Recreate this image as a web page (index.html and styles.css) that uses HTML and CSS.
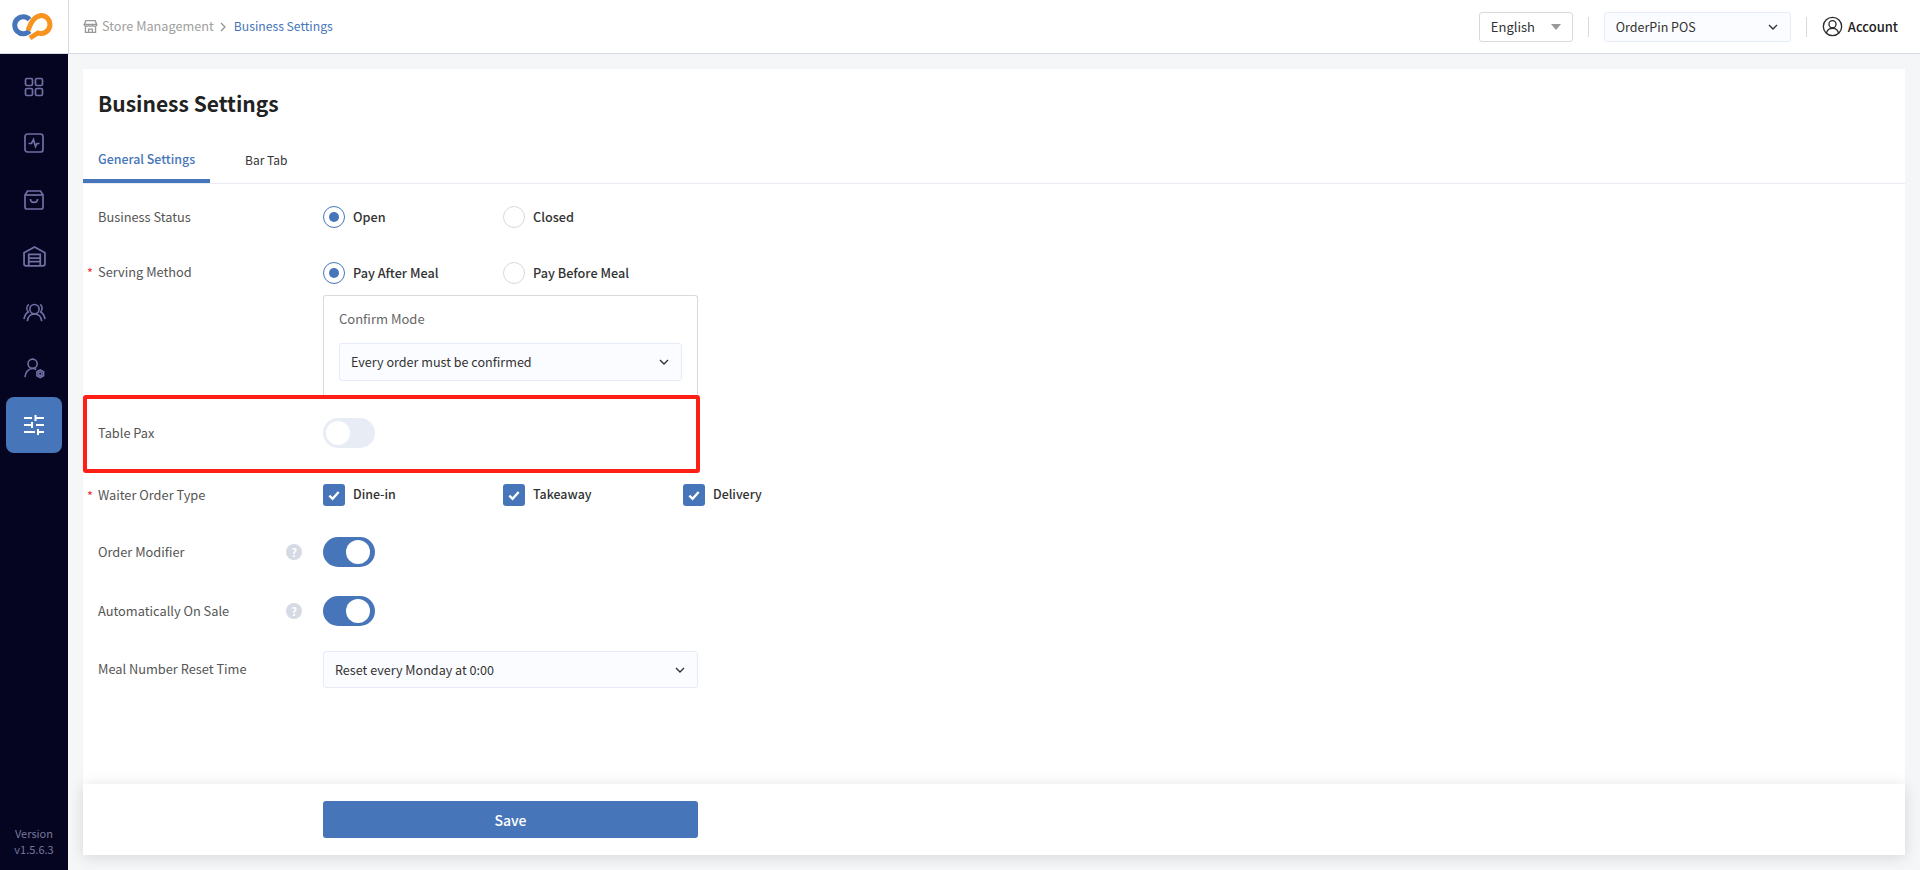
FILE: index.html
```html
<!DOCTYPE html>
<html lang="en">
<head>
<meta charset="utf-8">
<title>Business Settings</title>
<link rel="stylesheet" href="styles.css">
</head>
<body>
<header class="topbar">
  <div class="logo-cell">
    <svg class="logo" viewBox="0 0 42 28" width="42" height="28" fill="none" stroke-width="5">
      <path d="M17.500 6.500 A8.500 8.500 0 1 0 17.500 18" stroke="#4676b9"/>
      <path d="M16 17.500 C18 13 20 4 29 2.500 A9 9 0 1 1 26 20 L18 25" stroke="#f7931e"/>
    </svg>
  </div>
  <nav class="crumbs">
    <svg class="crumb-icon" viewBox="0 0 16 16" width="15" height="15" fill="none" stroke="#999" stroke-width="1.400">
      <path d="M3 1.800h10l1.600 4H1.400z"/><path d="M1.400 5.800c0 2.600 4.400 2.600 4.400 0 0 2.600 4.400 2.600 4.400 0 0 2.600 4.400 2.600 4.400 0"/><path d="M2.600 8v6.200h10.800V8"/><path d="M6 14v-3.200h4V14"/>
    </svg>
    <span class="crumb">Store Management</span>
    <svg class="crumb-sep" viewBox="0 0 8 10" width="8" height="10" fill="none" stroke="#8f8f8f" stroke-width="1.200"><path d="M2 1l4 4-4 4"/></svg>
    <span class="crumb crumb-current">Business Settings</span>
  </nav>
  <div class="top-actions">
    <div class="lang-select"><span>English</span><i class="caret"></i></div>
    <span class="vr"></span>
    <div class="store-select"><span>OrderPin POS</span>
      <svg viewBox="0 0 12 12" width="12" height="12" fill="none" stroke="#333" stroke-width="1.400"><path d="M2 4l4 4 4-4"/></svg>
    </div>
    <span class="vr"></span>
    <div class="account">
      <svg viewBox="0 0 22 22" width="21" height="21" fill="none" stroke="#2b2b2b" stroke-width="1.400"><circle cx="11" cy="11" r="9.600"/><circle cx="11" cy="8.600" r="3.700"/><path d="M4.600 18c.8-3.400 3.400-5 6.400-5s5.600 1.600 6.400 5"/></svg>
      <span>Account</span>
    </div>
  </div>
</header>
<div class="body-wrap">
  <aside class="sidebar">
    <ul class="menu">
      <li class="menu-item"><svg viewBox="0 0 20 20" class="mi"><rect x="1.500" y="1.500" width="7" height="7" rx="1.500"/><rect x="11.500" y="1.500" width="7" height="7" rx="1.500"/><rect x="1.500" y="11.500" width="7" height="7" rx="1.500"/><rect x="11.500" y="11.500" width="7" height="7" rx="1.500"/></svg></li>
      <li class="menu-item"><svg viewBox="0 0 20 20" class="mi"><rect x="1" y="1" width="18" height="18" rx="2.500"/><path d="M4.500 10.500h3l2-4 2 7 1.500-3h2.500"/></svg></li>
      <li class="menu-item"><svg viewBox="0 0 20 20" class="mi"><path d="M3.500 1h13l2.500 4V17a2 2 0 0 1-2 2H3a2 2 0 0 1-2-2V5z"/><path d="M1 5h18"/><path d="M6.500 9c0 4.500 7 4.500 7 0"/></svg></li>
      <li class="menu-item"><svg viewBox="0 0 22 20" class="mi mi-wide"><path d="M1 6.500L11 1l10 5.500V17a2 2 0 0 1-2 2H3a2 2 0 0 1-2-2z"/><path d="M5.500 19V8h11v11"/><path d="M5.500 11.500h11M5.500 15h11"/></svg></li>
      <li class="menu-item"><svg viewBox="0 0 24 20" class="mi mi-wide"><circle cx="12" cy="6.500" r="4.800"/><path d="M4.500 19c.5-4.500 3.500-7.500 7.500-7.500s7 3 7.500 7.500"/><path d="M6 1.500C3.500 3.500 3.500 7 5.500 9.500 3 11 1.500 14 1 17"/><path d="M18 1.500c2.500 2 2.500 5.500.5 8 2.500 1.500 4 4.500 4.500 7.500"/></svg></li>
      <li class="menu-item"><svg viewBox="0 0 22 22" class="mi mi-wide"><circle cx="9" cy="6" r="4.800"/><path d="M1 20c.3-5 3.700-9 8-9 1.500 0 2.700.4 3.800 1.100"/><circle cx="17" cy="16.500" r="1.800"/><path d="M17 12.500l3.500 2v4l-3.500 2-3.500-2v-4z"/></svg></li>
      <li class="menu-item is-active"><svg viewBox="0 0 20 20" class="mi mi-active"><path d="M0 3h8M11.500 3H20M11.500 0V6"/><path d="M0 10h5M12 10h8M8 7V13M4 10h4"/><path d="M0 17h11M14 17h6M14 14V20"/></svg></li>
    </ul>
    <div class="version"><div>Version</div><div>v1.5.6.3</div></div>
  </aside>
  <main class="page">
    <section class="card">
      <h1 class="title">Business Settings</h1>
      <div class="tabs">
        <div class="tab tab-active">General Settings</div>
        <div class="tab tab-second">Bar Tab</div>
      </div>
      <form class="form">
        <div class="row row-status">
          <label class="label">Business Status</label>
          <div class="options">
            <span class="option"><i class="radio on"></i><b>Open</b></span>
            <span class="option"><i class="radio"></i><b>Closed</b></span>
          </div>
        </div>
        <div class="row row-method">
          <label class="label label-raised req">Serving Method</label>
          <div class="options">
            <span class="option"><i class="radio on"></i><b>Pay After Meal</b></span>
            <span class="option"><i class="radio"></i><b>Pay Before Meal</b></span>
          </div>
        </div>
        <div class="confirm-box">
          <div class="confirm-title">Confirm Mode</div>
          <div class="select select-inner"><span>Every order must be confirmed</span>
            <svg viewBox="0 0 12 12" width="12" height="12" fill="none" stroke="#333" stroke-width="1.400"><path d="M2 4l4 4 4-4"/></svg>
          </div>
        </div>
        <div class="row row-pax">
          <label class="label">Table Pax</label>
          <i class="switch"></i>
          <div class="highlight"></div>
        </div>
        <div class="row row-waiter">
          <label class="label req">Waiter Order Type</label>
          <div class="options options-check">
            <span class="option"><i class="check"><svg viewBox="0 0 12 12" width="14" height="14" fill="none" stroke="#fff" stroke-width="2"><path d="M2 6.500l2.800 2.800L10 3.500"/></svg></i><b>Dine-in</b></span>
            <span class="option"><i class="check"><svg viewBox="0 0 12 12" width="14" height="14" fill="none" stroke="#fff" stroke-width="2"><path d="M2 6.500l2.800 2.800L10 3.500"/></svg></i><b>Takeaway</b></span>
            <span class="option"><i class="check"><svg viewBox="0 0 12 12" width="14" height="14" fill="none" stroke="#fff" stroke-width="2"><path d="M2 6.500l2.800 2.800L10 3.500"/></svg></i><b>Delivery</b></span>
          </div>
        </div>
        <div class="row row-modifier">
          <label class="label">Order Modifier<i class="help">?</i></label>
          <i class="switch on"></i>
        </div>
        <div class="row row-auto">
          <label class="label">Automatically On Sale<i class="help">?</i></label>
          <i class="switch on"></i>
        </div>
        <div class="row row-meal">
          <label class="label">Meal Number Reset Time</label>
          <div class="select select-meal"><span>Reset every Monday at 0:00</span>
            <svg viewBox="0 0 12 12" width="12" height="12" fill="none" stroke="#333" stroke-width="1.400"><path d="M2 4l4 4 4-4"/></svg>
          </div>
        </div>
      </form>
      <footer class="savebar"><button type="button" class="save">Save</button></footer>
    </section>
  </main>
</div>
</body>
</html>
```
FILE: styles.css
```css
* { box-sizing: border-box; }
html, body { margin: 0; height: 100%; }
body { font-family: "Noto Sans CJK SC", "Noto Sans", sans-serif; font-size: 13px; color: #333; background: #f5f6f8; display: flex; flex-direction: column; height: 870px; overflow: hidden; }
i { font-style: normal; }

.topbar { height: 54px; flex: none; display: flex; align-items: center; background: #fff; border-bottom: 1px solid #d8dae3; }
.logo-cell { width: 69px; height: 53px; flex: none; display: flex; align-items: center; justify-content: center; border-right: 1px solid #d8dae3; }
.logo { display: block; margin-left: -2px; }
.crumbs { display: flex; align-items: center; padding-left: 14px; color: #a0a0a0; flex: 1; }
.crumb-icon { margin-right: 4px; }
.crumb { font-size: 12.700px; padding-bottom: 2px; }
.crumb-sep { margin: 0 7px 0 5px; }
.crumb-current { color: #4676b9; font-size: 12.200px; }
.top-actions { display: flex; align-items: center; padding-right: 22px; }
.lang-select { width: 94px; height: 30px; border: 1px solid #d9d9d9; border-radius: 3px; display: flex; align-items: center; justify-content: space-between; padding: 0 11px; }
.caret { width: 0; height: 0; border-left: 5.500px solid transparent; border-right: 5.500px solid transparent; border-top: 6px solid #999; }
.vr { width: 1px; height: 20px; background: #d8dae3; margin: 0 15px; }
.store-select { width: 187px; height: 30px; border: 1px solid #e6ecf7; border-radius: 3px; background: #fbfcff; display: flex; align-items: center; justify-content: space-between; padding: 0 11px; font-size: 12.500px; }
.account { display: flex; align-items: center; gap: 5px; font-weight: 500; color: #222; padding-bottom: 1px; }

.body-wrap { flex: 1; display: flex; min-height: 0; }
.sidebar { width: 68px; flex: none; background: #050521; display: flex; flex-direction: column; align-items: center; justify-content: space-between; }
.menu { list-style: none; margin: 0; padding: 5px 0 0; width: 100%; }
.menu-item { height: 56.300px; display: flex; align-items: center; justify-content: center; margin: 0 6px; }
.is-active { height: 56px; background: #4676b9; border-radius: 8px; }
.mi { width: 20px; height: 20px; fill: none; stroke: #6f6fa3; stroke-width: 1.700; }
.mi-wide { width: 23px; height: 21px; }
.mi-active { stroke: #fff; width: 20px; height: 20px; stroke-width: 2; }
.version { font-size: 11px; color: #77779a; text-align: center; line-height: 16px; padding-bottom: 13px; }

.page { flex: 1; padding: 15px; min-width: 0; display: flex; }
.card { flex: 1; background: #fff; display: flex; flex-direction: column; min-width: 0; }
.title { margin: 0; padding: 15px 15px 0; font-size: 21px; line-height: 38px; height: 54px; color: #222; font-weight: 700; }
.tabs { display: flex; height: 61px; border-bottom: 1px solid #e8ebf2; }
.tab { padding: 0 15px; line-height: 73px; height: 60px; font-size: 12.400px; }
.tab-active { width: 127px; color: #4676b9; font-weight: 500; border-bottom: 4px solid #4676b9; white-space: nowrap; }
.tab-second { margin-left: 21px; color: #333; padding: 0 15px 0 14px; font-size: 12px; }

.form { flex: 1; padding-top: 18px; }
.row { display: flex; align-items: center; height: 30px; position: relative; }
.label { width: 240px; flex: none; padding: 0 0 2px 15px; color: #555; position: relative; display: block; font-size: 12.800px; }
.label-raised { padding-bottom: 4px; }
.req::before { content: "*"; color: #f5222d; position: absolute; left: 4px; top: 1px; }
.options { display: flex; }
.option { width: 180px; display: flex; align-items: center; gap: 8px; }
.option b { font-weight: 500; color: #333; font-size: 12.700px; padding-bottom: 2px; }
.options-check .option b { font-size: 12.400px; }
.radio { width: 22px; height: 22px; border-radius: 50%; border: 1px solid #d9d9d9; background: #fff; display: block; position: relative; }
.radio.on { border-color: #4676b9; }
.radio.on::after { content: ""; position: absolute; inset: 5px; background: #4676b9; border-radius: 50%; }
.check { width: 22px; height: 22px; border-radius: 3px; background: #4676b9; display: flex; align-items: center; justify-content: center; }

.row-method { margin-top: 26px; }
.confirm-box { margin: 7px 0 0 240px; width: 375px; height: 100px; border: 1px solid #d9dae0; border-bottom: 0; border-radius: 3px 3px 0 0; padding: 10px 15px 0; }
.confirm-title { color: #666; line-height: 26px; }
.select { display: flex; align-items: center; justify-content: space-between; border: 1px solid #e6ecf7; border-radius: 3px; background: #fbfcff; color: #333; font-size: 12.600px; }
.select span { padding-bottom: 1px; }
.select-inner { margin-top: 11px; height: 38px; padding: 0 11px; }
.select-meal { width: 375px; height: 37px; padding: 0 11px; }

.row-pax { height: 76px; }
.highlight { position: absolute; left: 0; top: 0; width: 617px; height: 78px; border: 4px solid #ff1f14; border-radius: 3px; pointer-events: none; }
.switch { width: 52px; height: 30px; border-radius: 15px; background: #e8ecf5; display: block; position: relative; }
.switch::after { content: ""; position: absolute; width: 24px; height: 24px; border-radius: 50%; background: #fff; top: 3px; left: 3px; }
.switch.on { background: #4676b9; }
.switch.on::after { left: auto; right: 5px; }

.row-waiter { margin-top: 9px; }
.row-modifier { margin-top: 27px; }
.row-auto { margin-top: 29px; }
.row-meal { margin-top: 25px; height: 37px; }
.help { position: absolute; left: 203px; top: 50%; margin-top: -8px; width: 16px; height: 16px; border-radius: 50%; background: #d6dae5; color: #fff; font-size: 11px; font-weight: 700; line-height: 16px; text-align: center; }

.savebar { height: 71px; flex: none; background: #fff; box-shadow: 0 2px 14px rgba(0,0,0,.13); padding: 17px 0 0 240px; }
.save { width: 375px; height: 37px; border: 0; border-radius: 3px; background: #4676b9; color: #fff; font: 500 14px "Noto Sans CJK SC", "Noto Sans", sans-serif; }
```
